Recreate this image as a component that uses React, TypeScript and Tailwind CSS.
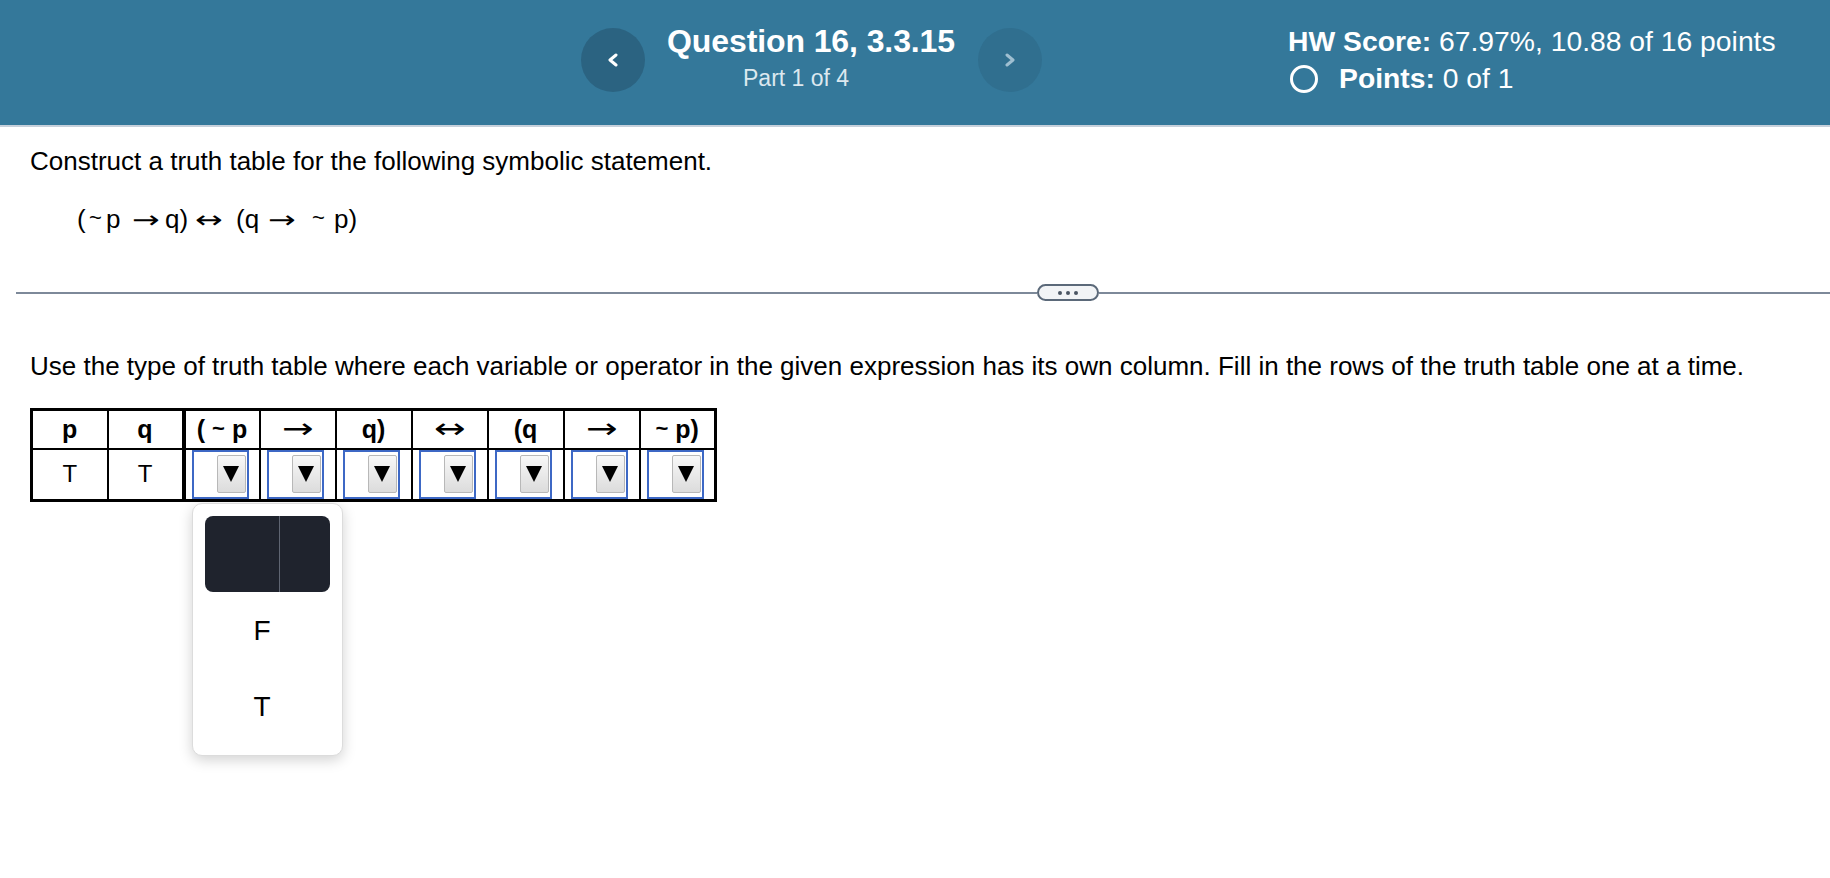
import React from "react";

const font = { fontFamily: '"Liberation Sans", Arial, Helvetica, sans-serif' };
const arrowFont = { fontFamily: '"DejaVu Sans", "Liberation Sans", sans-serif' };

function Select() {
  return (
    <div className="ml-[6px] w-[57px] h-[49px] border-2 border-[#3d68c5] bg-white flex items-center justify-end pr-[1px]">
      <div className="w-[29px] h-[38px] border border-[#b8b8b8] rounded-[2px] bg-linear-to-b from-[#f8f8f8] to-[#dcdcdc] flex items-center justify-center">
        <svg width="16" height="16" viewBox="0 0 16 16">
          <polygon points="0,0 16,0 8,16" fill="#000" />
        </svg>
      </div>
    </div>
  );
}

function Tl() {
  return <span className="text-[22px] align-[2px]">~</span>;
}

function HArrow({ c }: { c: string }) {
  return (
    <span className="inline-block text-[28px] leading-[30px] font-normal scale-x-[1.35]" style={arrowFont}>
      {c}
    </span>
  );
}

export default function App() {
  const headers: React.ReactNode[] = [
    "p",
    "q",
    <>
      {"( "}
      <Tl />
      {" p"}
    </>,
    <HArrow c="→" />,
    "q)",
    <HArrow c="↔" />,
    "(q",
    <HArrow c="→" />,
    <>
      <Tl />
      {" p)"}
    </>,
  ];

  const formula: { t: string; ml: string; w: string; kind: "t" | "a" | "tl" }[] = [
    { t: "(", ml: "ml-0", w: "w-[12px]", kind: "t" },
    { t: "~", ml: "ml-0", w: "w-[14px]", kind: "tl" },
    { t: "p", ml: "ml-[3px]", w: "w-[16px]", kind: "t" },
    { t: "→", ml: "ml-[10px]", w: "w-[28px]", kind: "a" },
    { t: "q)", ml: "ml-[5px]", w: "w-[24px]", kind: "t" },
    { t: "↔", ml: "ml-[6px]", w: "w-[30px]", kind: "a" },
    { t: "(q", ml: "ml-[11px]", w: "w-[24px]", kind: "t" },
    { t: "→", ml: "ml-[8px]", w: "w-[28px]", kind: "a" },
    { t: "~", ml: "ml-[16px]", w: "w-[16px]", kind: "tl" },
    { t: "p)", ml: "ml-[6px]", w: "w-[24px]", kind: "t" },
  ];

  return (
    <div className="min-h-[878px] bg-white text-black" style={font}>
      {/* Header */}
      <header className="flex items-start h-[127px] bg-[#34789a] border-b-2 border-[#c6d0db]">
        <div className="ml-[581px] mt-[28px] w-16 h-16 rounded-full bg-[#2b6381] flex items-center justify-center">
          <svg width="12" height="14" viewBox="0 0 12 14">
            <polyline points="9,2 3,7 9,12" fill="none" stroke="#fff" strokeWidth="3" strokeLinecap="round" strokeLinejoin="round" />
          </svg>
        </div>
        <div className="ml-[22px] pt-[22px] flex flex-col">
          <div className="text-[32px] leading-[38px] font-bold text-white tracking-[-0.1px]">Question 16, 3.3.15</div>
          <div className="mt-[4px] ml-[76px] text-[23px] leading-[28px] text-[#dce8ef]">Part 1 of 4</div>
        </div>
        <div className="ml-[23px] mt-[28px] w-16 h-16 rounded-full bg-[#306f8f] flex items-center justify-center">
          <svg width="12" height="14" viewBox="0 0 12 14">
            <polyline points="3,2 9,7 3,12" fill="none" stroke="#9fbfd1" strokeWidth="3" strokeLinecap="round" strokeLinejoin="round" />
          </svg>
        </div>
        <div className="ml-[246px] mt-[23px] text-white text-[28.3px] leading-[37px]">
          <div>
            <span className="font-bold">HW Score:</span> 67.97%, 10.88 of 16 points
          </div>
          <div className="flex items-center">
            <div className="ml-[2px] w-[28px] h-[28px] rounded-full border-[3px] border-white" />
            <span className="ml-[21px] font-bold">Points:</span>
            <span>&nbsp;0 of 1</span>
          </div>
        </div>
      </header>

      {/* Content */}
      <div className="pl-[30px] pt-[19px] text-[26px] leading-[30px]">
        <p>Construct a truth table for the following symbolic statement.</p>
        <div className="mt-[28px] ml-[47px] flex items-center h-[30px]">
          {formula.map((f, i) => (
            <span key={i} className={"inline-block shrink-0 " + f.ml + " " + f.w}>
              {f.kind === "a" ? (
                <span
                  className="inline-block origin-left text-[24px] leading-[30px] scale-x-[1.38]"
                  style={arrowFont}
                >
                  {f.t}
                </span>
              ) : f.kind === "tl" ? (
                <span className="text-[22px] relative top-[-2px]">{f.t}</span>
              ) : (
                f.t
              )}
            </span>
          ))}
        </div>
      </div>

      {/* Divider */}
      <div className="mt-[50px] ml-[16px] flex items-center h-[17px]">
        <div className="w-[1021px] h-[2px] bg-[#7d8999]" />
        <div className="w-[62px] h-[17px] rounded-full border-2 border-[#5b6979] bg-[#f2f4f6] flex items-center justify-center gap-[4px]">
          <span className="w-[4px] h-[4px] rounded-full bg-[#4b5563]" />
          <span className="w-[4px] h-[4px] rounded-full bg-[#4b5563]" />
          <span className="w-[4px] h-[4px] rounded-full bg-[#4b5563]" />
        </div>
        <div className="flex-1 h-[2px] bg-[#7d8999]" />
      </div>

      <p className="mt-[50px] pl-[30px] text-[26px] leading-[30px]">
        Use the type of truth table where each variable or operator in the given expression has its own column. Fill in the rows of the truth table one at a time.
      </p>

      {/* Table */}
      <div className="relative ml-[30px] mt-[27px] w-fit">
        <table className="border-collapse border-[3px] border-black">
          <thead>
            <tr className="h-[39px]">
              {headers.map((h, i) => (
                <th
                  key={i}
                  className={
                    "w-[76px] p-0 text-center text-[25px] font-bold leading-[30px] border-2 border-black whitespace-pre " +
                    (i === 1 ? "border-r-4" : "")
                  }
                >
                  {h}
                </th>
              ))}
            </tr>
          </thead>
          <tbody>
            <tr className="h-[52px]">
              <td className="p-0 text-center text-[24px] border-2 border-black">T</td>
              <td className="p-0 text-center text-[24px] border-2 border-black border-r-4">T</td>
              {[0, 1, 2, 3, 4, 5, 6].map((i) => (
                <td key={i} className="p-0 border-2 border-black align-middle">
                  <Select />
                </td>
              ))}
            </tr>
          </tbody>
        </table>

        {/* Dropdown popup */}
        <div className="absolute left-[162px] top-[95px] w-[151px] h-[253px] bg-white rounded-[10px] border border-[#dcdcdc] shadow-[0_4px_14px_rgba(0,0,0,0.18)] flex flex-col">
          <div className="mt-[12px] ml-[12px] w-[125px] h-[76px] rounded-[8px] bg-[#1f232d] flex">
            <div className="w-[75px] h-full border-r border-[#5f6572]" />
          </div>
          <div className="mt-[22px] pr-[11px] text-center text-[28px] leading-[34px]">F</div>
          <div className="mt-[42px] pr-[11px] text-center text-[28px] leading-[34px]">T</div>
        </div>
      </div>
    </div>
  );
}
